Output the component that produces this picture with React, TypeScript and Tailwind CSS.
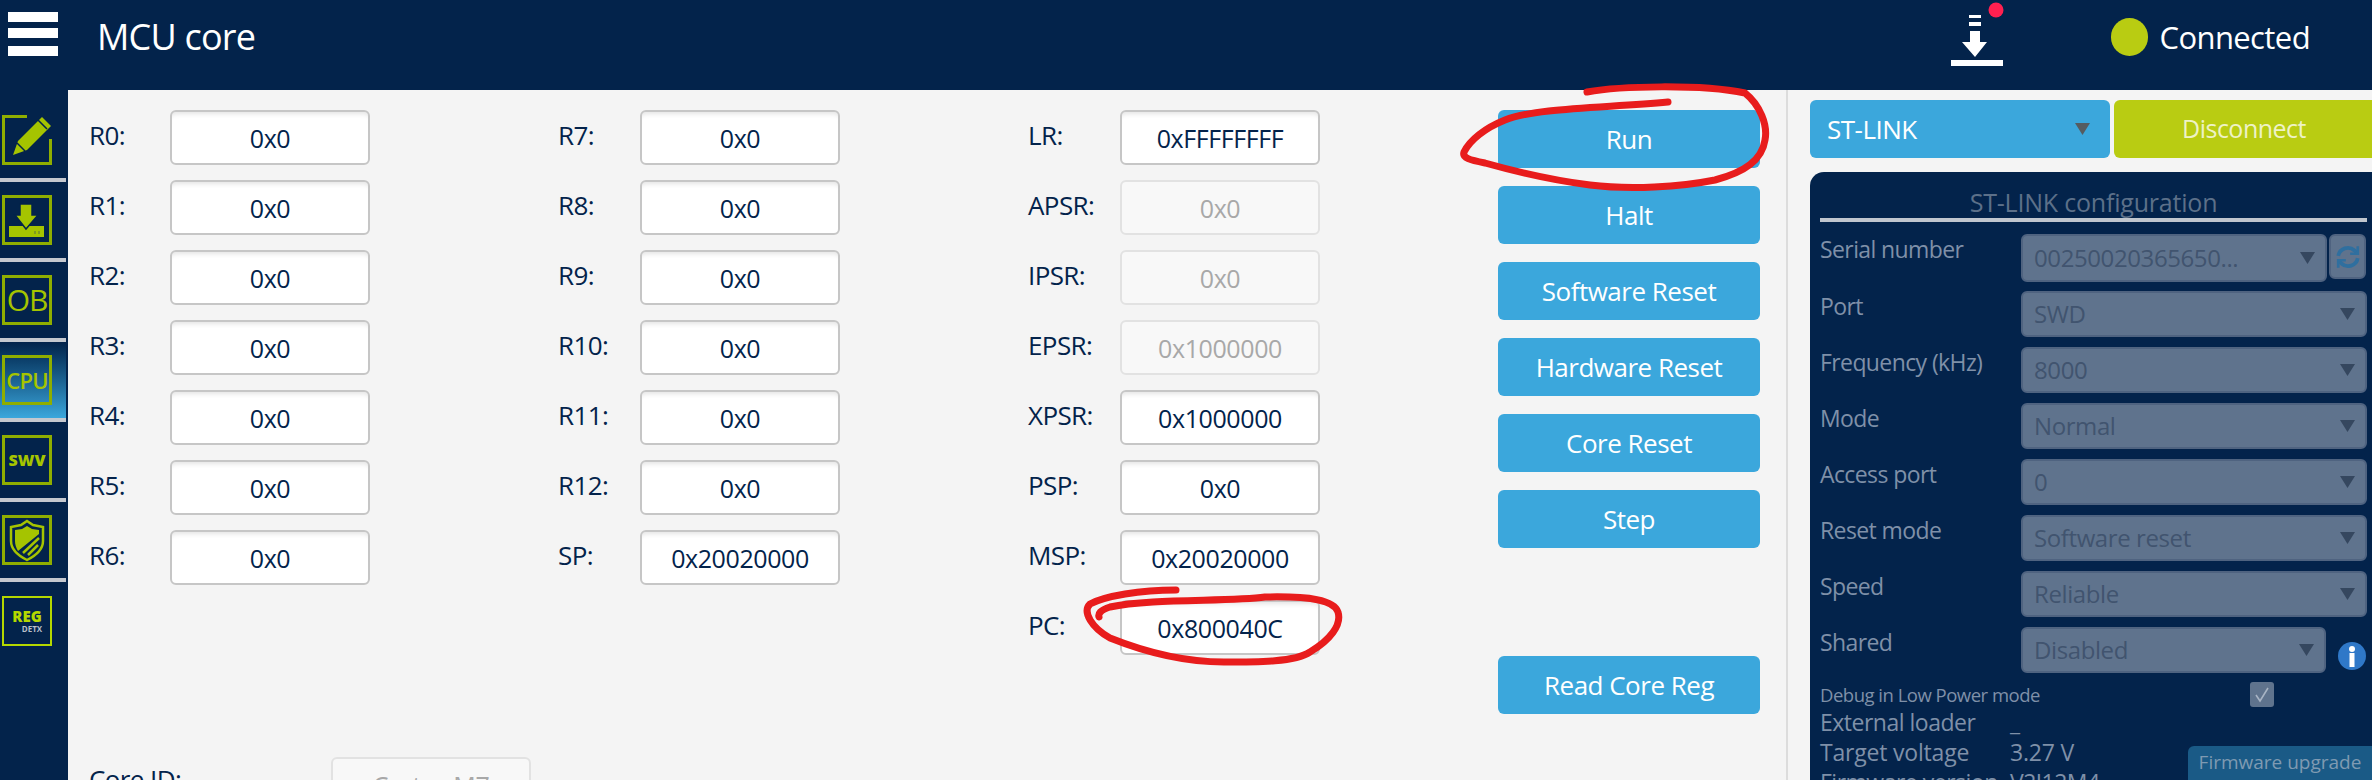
import type { ReactNode } from 'react'

const col1 = [['R0:'], ['R1:'], ['R2:'], ['R3:'], ['R4:'], ['R5:'], ['R6:']]
const col2 = [
  ['R7:', '0x0'],
  ['R8:', '0x0'],
  ['R9:', '0x0'],
  ['R10:', '0x0'],
  ['R11:', '0x0'],
  ['R12:', '0x0'],
  ['SP:', '0x20020000'],
]
const col3: [string, string, boolean?][] = [
  ['LR:', '0xFFFFFFFF'],
  ['APSR:', '0x0', true],
  ['IPSR:', '0x0', true],
  ['EPSR:', '0x1000000', true],
  ['XPSR:', '0x1000000'],
  ['PSP:', '0x0'],
  ['MSP:', '0x20020000'],
  ['PC:', '0x800040C'],
]

const configRows = [
  ['Port', 'SWD'],
  ['Frequency (kHz)', '8000'],
  ['Mode', 'Normal'],
  ['Access port', '0'],
  ['Reset mode', 'Software reset'],
  ['Speed', 'Reliable'],
]

function Reg({ label, value, disabled, labelClass }: { label: string; value: string; disabled?: boolean; labelClass: string }) {
  return (
    <div className="flex h-[55px] items-start">
      <span className={`mt-[8px] text-[26px] leading-[35px] tracking-[-0.6px] text-[#03234b] ${labelClass}`}>{label}</span>
      {disabled ? (
        <div className="flex h-[55px] w-[200px] items-center justify-center rounded-md border-2 border-[#e2e2e2] bg-[#f8f8f8] pt-[3px] text-[25px] tracking-[-0.4px] text-[#a8a8a8]">
          {value}
        </div>
      ) : (
        <div className="flex h-[55px] w-[200px] items-center justify-center rounded-md border-2 border-[#c6c6c6] bg-white pt-[3px] text-[25px] tracking-[-0.4px] text-[#03234b] shadow-[inset_0_6px_5px_-4px_#e4e4e4]">
          {value}
        </div>
      )}
    </div>
  )
}

function ActionButton({ children, className }: { children: ReactNode; className?: string }) {
  return (
    <button className={`flex h-[58px] w-[262px] items-center justify-center rounded-md bg-[#3ba7dc] text-[26px] tracking-[-0.5px] text-white ${className ?? ''}`}>
      {children}
    </button>
  )
}

function Caret({ color = '#35475f' }: { color?: string }) {
  return (
    <svg width="15" height="12" viewBox="0 0 15 12">
      <path d="M0 0h15L7.5 12z" fill={color} />
    </svg>
  )
}

function ConfigSelect({ value, className }: { value: string; className?: string }) {
  return (
    <div className={`flex items-center justify-between rounded-md border-2 border-[#4f6380] bg-[#5f738d] pl-[11px] pr-[10px] text-[24px] tracking-[-0.4px] text-[#41546f] ${className ?? ''}`}>
      <span>{value}</span>
      <Caret />
    </div>
  )
}

function SideItem({ children, active, bare }: { children: ReactNode; active?: boolean; bare?: boolean }) {
  return (
    <div className="h-[80px]">
      <div className={`flex h-[76px] w-[66px] items-center pl-[2px] ${active ? 'bg-gradient-to-b from-[#03234b] to-[#3ba7dc]' : ''}`}>
        {bare ? (
          children
        ) : (
          <div className="flex h-[50px] w-[50px] items-center justify-center overflow-hidden border-[3px] border-[#8fae00] text-[#a5c400]">
            {children}
          </div>
        )}
      </div>
      <div className="h-[4px] w-[66px] bg-[#c4c8cf]" />
    </div>
  )
}

export default function App() {
  return (
    <div className="relative flex h-[780px] w-[2372px] flex-col overflow-hidden bg-[#f4f4f4] font-['Open_Sans','Noto_Sans',sans-serif]">
      <header className="flex h-[90px] shrink-0 items-start bg-[#03234b] text-white">
        <div className="ml-[8px] mt-[12px] flex w-[50px] flex-col">
          <div className="h-[10px] bg-white" />
          <div className="mt-[6px] h-[10px] bg-white" />
          <div className="mt-[8px] h-[10px] bg-white" />
        </div>
        <h1 className="ml-[39px] mt-[13px] text-[36px] leading-[48px] tracking-[-0.8px]">MCU core</h1>
        <div className="relative ml-auto mr-[102px] mt-[2px] h-[66px] w-[60px]">
          <svg width="60" height="66" viewBox="0 0 60 66">
            <path d="M20 13h12v3H20zM20 20h12v4H20zM21 29h10v11h7L26 55 13 40h8zM2 58h52v6H2z" fill="#fff" />
            <circle cx="47" cy="8" r="7.5" fill="#ff2050" />
          </svg>
        </div>
        <div className="mr-[62px] mt-[18px] flex items-center">
          <div className="h-[38px] w-[37px] rounded-full bg-[#b9cc12]" />
          <span className="ml-[12px] text-[31px] leading-[38px] tracking-[-0.6px]">Connected</span>
        </div>
      </header>

      <div className="flex min-h-0 flex-1">
        <aside className="w-[68px] shrink-0 bg-[#03234b] pt-[12px]">
          <SideItem bare>
            <svg width="50" height="50" viewBox="0 0 50 50">
              <path d="M25 1.5H1.5v47h47V24" fill="none" stroke="#8fae00" strokeWidth="3" />
              <path d="M11 40l5-14L40 2l9 9-24 24z" fill="#a5c400" />
              <path d="M15 28l8 8M36 5l9 9" stroke="#03234b" strokeWidth="1.5" />
            </svg>
          </SideItem>
          <SideItem>
            <svg width="44" height="44" viewBox="0 0 44 44">
              <path d="M4 28h35v11H4z" fill="#a5c400" />
              <path d="M15 6h12v11h6L21 31 10 17h5z" fill="#a5c400" stroke="#03234b" strokeWidth="1.5" />
              <path d="M29 33h2v3h-2zM33 33h2v3h-2z" fill="#7f9a20" />
            </svg>
          </SideItem>
          <SideItem>
            <span className="text-[30px] leading-none tracking-[-1px]">OB</span>
          </SideItem>
          <SideItem active>
            <span className="text-[22px] font-semibold leading-none tracking-[-0.8px]">CPU</span>
          </SideItem>
          <SideItem>
            <span className="text-[16px] font-extrabold leading-none">SWV</span>
          </SideItem>
          <SideItem>
            <svg width="44" height="44" viewBox="0 0 44 44" fill="none" stroke="#a5c400">
              <path d="M22 3l6 4 10 2v14c0 9-8 15-16 19C14 38 6 32 6 23V9l10-2z" strokeWidth="2.5" />
              <path d="M22 8l5 3 7 1v4L13 33c-2-3-3-7-3-10V12l7-1z" fill="#a5c400" stroke="none" />
              <path d="M34 20L18 35M33 27L23 37" strokeWidth="2.5" />
            </svg>
          </SideItem>
          <div className="h-[80px] pl-[2px] pt-[14px]">
            <div className="flex h-[50px] w-[50px] flex-col items-center justify-center border-[2px] border-[#b4d800] leading-none">
              <span className="text-[15px] font-extrabold leading-[16px] text-[#b4d800]">REG</span>
              <span className="ml-[10px] text-[8px] font-bold leading-[10px] text-[#b8bec8]">DETX</span>
            </div>
          </div>
        </aside>

        <main className="w-[1720px] shrink-0 border-r-2 border-[#dcdcdc] pl-[21px] pt-[20px]">
          <div className="flex">
            <div className="flex w-[469px] flex-col gap-[15px]">
              {col1.map(([l]) => (
                <Reg key={l} label={l} value="0x0" labelClass="w-[81px]" />
              ))}
            </div>
            <div className="flex w-[470px] flex-col gap-[15px]">
              {col2.map(([l, v]) => (
                <Reg key={l} label={l} value={v} labelClass="w-[82px]" />
              ))}
            </div>
            <div className="flex w-[470px] flex-col gap-[15px]">
              {col3.map(([l, v, d]) => (
                <Reg key={l} label={l} value={v} disabled={d} labelClass="w-[92px]" />
              ))}
            </div>
            <div className="flex flex-col gap-[18px]">
              <ActionButton>Run</ActionButton>
              <ActionButton>Halt</ActionButton>
              <ActionButton>Software Reset</ActionButton>
              <ActionButton>Hardware Reset</ActionButton>
              <ActionButton>Core Reset</ActionButton>
              <ActionButton>Step</ActionButton>
              <ActionButton className="mt-[90px]">Read Core Reg</ActionButton>
            </div>
          </div>
          <div className="mt-[43px] flex items-start">
            <span className="mt-[5px] w-[242px] text-[26px] leading-[35px] tracking-[-0.6px] text-[#03234b]">Core ID:</span>
            <div className="flex h-[55px] w-[200px] items-center justify-center rounded-md border-2 border-[#e2e2e2] bg-[#f8f8f8] pt-[3px] text-[25px] tracking-[-0.4px] text-[#a8a8a8]">
              Cortex M7
            </div>
          </div>
        </main>

        <section className="min-w-0 flex-1 pl-[22px] pt-[10px]">
          <div className="flex h-[58px]">
            <div className="flex w-[300px] items-center justify-between rounded-md bg-[#3ba7dc] pl-[17px] pr-[20px] text-[26px] tracking-[-0.5px] text-white">
              <span>ST-LINK</span>
              <Caret color="#555c60" />
            </div>
            <div className="ml-[4px] flex flex-1 items-center justify-center rounded-l-md bg-[#b9cc12] pl-[2px] text-[25px] tracking-[-0.5px] text-[#eef2c6]">
              Disconnect
            </div>
          </div>
          <div className="mt-[14px] h-[700px] rounded-tl-[14px] bg-[#03234b] pl-[10px] pr-[5px] pt-[14px] text-[#7f90a8]">
            <div className="border-b-4 border-[#c0c6ce] text-center text-[25px] leading-[32px] tracking-[-0.2px] text-[#5c7089]">
              ST-LINK configuration
            </div>
            <div className="mt-[12px] flex items-start">
              <span className="mt-[-1px] w-[201px] text-[23px] leading-[32px] tracking-[-0.6px]">Serial number</span>
              <ConfigSelect value="00250020365650..." className="h-[48px] w-[306px]" />
              <div className="ml-[2px] flex h-[45px] w-[37px] items-center justify-center rounded-md border-2 border-[#4f6380] bg-[#5f738d]">
                <svg width="26" height="26" viewBox="0 0 24 24" fill="none" stroke="#2f6f9f" strokeWidth="3.5">
                  <path d="M3 11a9 9 0 0 1 15-5l2 2M21 13a9 9 0 0 1-15 5l-2-2" />
                  <path d="M21 2v7h-7M3 22v-7h7" strokeWidth="2.5" />
                </svg>
              </div>
            </div>
            {configRows.map(([l, v], i) => (
              <div key={l} className={i === 0 ? 'mt-[9px] flex items-start' : 'mt-[10px] flex items-start'}>
                <span className="mt-[-1px] w-[201px] text-[23px] leading-[32px] tracking-[-0.6px]">{l}</span>
                <ConfigSelect value={v} className="h-[46px] w-[346px]" />
              </div>
            ))}
            <div className="mt-[10px] flex items-start">
              <span className="mt-[-1px] w-[201px] text-[23px] leading-[32px] tracking-[-0.6px]">Shared</span>
              <ConfigSelect value="Disabled" className="h-[46px] w-[305px]" />
              <svg width="28" height="28" viewBox="0 0 28 28" className="ml-[12px] mt-[15px]">
                <circle cx="14" cy="14" r="14" fill="#2f78c8" />
                <rect x="11.5" y="11" width="5" height="14" fill="#fff" />
                <circle cx="14" cy="7" r="3" fill="#fff" />
              </svg>
            </div>
            <div className="mt-[9px] flex h-[25px] items-center">
              <span className="w-[430px] text-[18.5px] tracking-[-0.5px]">Debug in Low Power mode</span>
              <div className="flex h-[25px] w-[24px] items-center justify-center rounded-[3px] bg-[#5f738d]">
                <svg width="16" height="16" viewBox="0 0 16 16" fill="none" stroke="#a8b4c4" strokeWidth="1.6">
                  <path d="M2 8l4 6 8-13" />
                </svg>
              </div>
            </div>
            <div className="flex h-[30px] items-center text-[23px] leading-none tracking-[-0.5px]">
              <span className="w-[190px]">External loader</span>
              <span>_</span>
            </div>
            <div className="flex h-[30px] items-center text-[23px] leading-none tracking-[-0.2px]">
              <span className="w-[190px]">Target voltage</span>
              <span>3.27 V</span>
            </div>
            <div className="relative flex h-[30px] items-center text-[23px] leading-none tracking-[-0.5px]">
              <span className="w-[190px] whitespace-nowrap">Firmware version</span>
              <span>V2J12M4</span>
            </div>
          </div>
        </section>
      </div>

      <div className="absolute left-[2188px] top-[746px] flex h-[40px] w-[184px] items-start justify-center rounded-tl-md bg-[#1a5a86] pt-[2px] text-[19px] text-[#7f9ab2]">
        Firmware upgrade
      </div>

      {/* hand drawn marks over the screenshot */}
      <svg width="2372" height="780" viewBox="0 0 2372 780" className="pointer-events-none absolute left-0 top-0" fill="none" stroke="#e81c1c" strokeWidth="7" strokeLinecap="round" strokeLinejoin="round">
        <path d="M1587 92C1620 86 1700 84 1745 93C1760 105 1768 125 1765 140C1762 160 1745 172 1715 180C1680 187 1630 190 1590 185C1550 180 1510 170 1485 163C1470 160 1462 158 1464 152C1470 140 1485 128 1505 120C1535 108 1600 108 1668 102" />
        <path d="M1176 590C1140 590 1105 596 1090 604C1082 612 1092 628 1110 638C1140 650 1180 662 1224 662C1260 662 1295 662 1310 652C1330 640 1342 625 1338 612C1334 600 1310 596 1265 597C1230 602 1150 598 1110 607C1100 610 1098 614 1099 617" />
      </svg>
    </div>
  )
}
